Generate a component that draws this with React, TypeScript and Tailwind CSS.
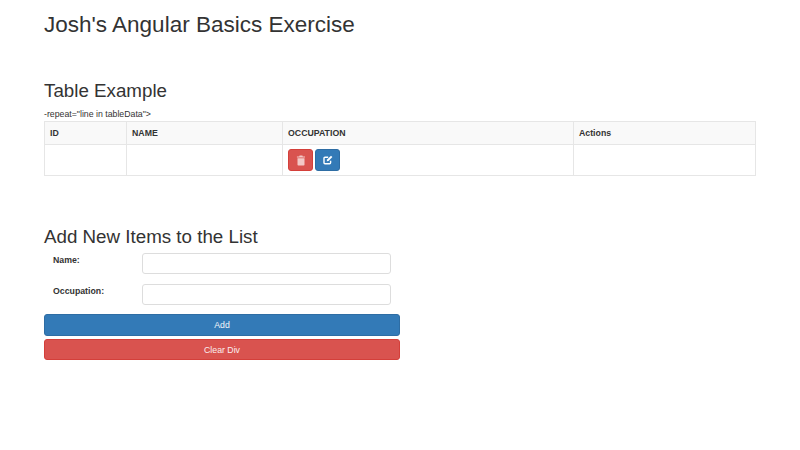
const columns = [
  { label: 'ID', width: 'w-[82px]' },
  { label: 'NAME', width: 'w-[156px]' },
  { label: 'OCCUPATION', width: 'w-[291px]' },
  { label: 'Actions', width: 'flex-1' },
];

function TrashIcon() {
  return (
    <svg width="10" height="11" viewBox="0 0 10 11" fill="#f3c9c7">
      <path d="M3.6 0.4h2.8l0.4 1h2.2v1.2H0.9V1.4h2.3z" />
      <path d="M1.5 3.2h7v6.6c0 0.5-0.3 0.8-0.8 0.8H2.3c-0.5 0-0.8-0.3-0.8-0.8z" />
    </svg>
  );
}

function EditIcon() {
  return (
    <svg width="10" height="10" viewBox="0 0 10 10" fill="none" stroke="#fff">
      <path d="M7.6 5.8v2c0 0.6-0.4 1-1 1H2c-0.6 0-1-0.4-1-1V3.2c0-0.6 0.4-1 1-1h3.2" strokeWidth="1.4" />
      <path d="M3.8 6.2l0.3-1.7L8 0.7l1.4 1.4-3.9 3.9z" fill="#fff" stroke="none" />
    </svg>
  );
}

export default function App() {
  return (
    <div className="min-h-[450px] bg-white px-[44px] pt-[10px] text-[8.75px] leading-[14px] text-[#333] font-['Liberation_Sans',Arial,sans-serif]">
      <h1 className="text-[22.5px] leading-[29px] font-normal">Josh's Angular Basics Exercise</h1>

      <h2 className="mt-[39px] text-[18.75px] leading-[26px] font-normal">Table Example</h2>
      <div className="mt-[3px] leading-[14px]">-repeat="line in tableData"&gt;</div>

      <div className="w-[712px] border border-[#e6e6e6]">
        <div className="flex h-[23px] border-b border-[#e6e6e6] bg-[#f9f9f9]">
          {columns.map((col, i) => (
            <div
              key={col.label}
              className={`${col.width} ${i < 3 ? 'border-r border-[#e6e6e6]' : ''} flex items-center pl-[5px] font-bold`}
            >
              {col.label}
            </div>
          ))}
        </div>
        <div className="flex h-[30px]">
          <div className="w-[82px] border-r border-[#e6e6e6]" />
          <div className="w-[156px] border-r border-[#e6e6e6]" />
          <div className="w-[291px] border-r border-[#e6e6e6] flex items-center gap-[2px] pl-[5px]">
            <button className="flex h-[22px] w-[25px] items-center justify-center rounded-[3px] border border-[#d43f3a] bg-[#d9534f]">
              <TrashIcon />
            </button>
            <button className="flex h-[22px] w-[25px] items-center justify-center rounded-[3px] border border-[#2e6da4] bg-[#337ab7]">
              <EditIcon />
            </button>
          </div>
          <div className="flex-1" />
        </div>
      </div>

      <h2 className="mt-[48px] text-[18.75px] leading-[26px] font-normal">Add New Items to the List</h2>

      <div className="w-[356px]">
        <div className="mt-[3px] flex h-[21px] w-[347px]">
          <label className="w-[98px] pl-[9px] font-bold">Name:</label>
          <input className="h-[21px] w-[249px] rounded-[3px] border border-[#ddd] bg-white" />
        </div>
        <div className="mt-[10px] flex h-[21px] w-[347px]">
          <label className="w-[98px] pl-[9px] font-bold">Occupation:</label>
          <input className="h-[21px] w-[249px] rounded-[3px] border border-[#ddd] bg-white" />
        </div>
        <button className="mt-[9px] block h-[22px] w-full rounded-[3px] border border-[#2e6da4] bg-[#337ab7] text-center text-[#f2f6fa]">
          Add
        </button>
        <button className="mt-[3px] block h-[21px] w-full rounded-[3px] border border-[#d43f3a] bg-[#d9534f] text-center text-[#fbeeee]">
          Clear Div
        </button>
      </div>
    </div>
  );
}
